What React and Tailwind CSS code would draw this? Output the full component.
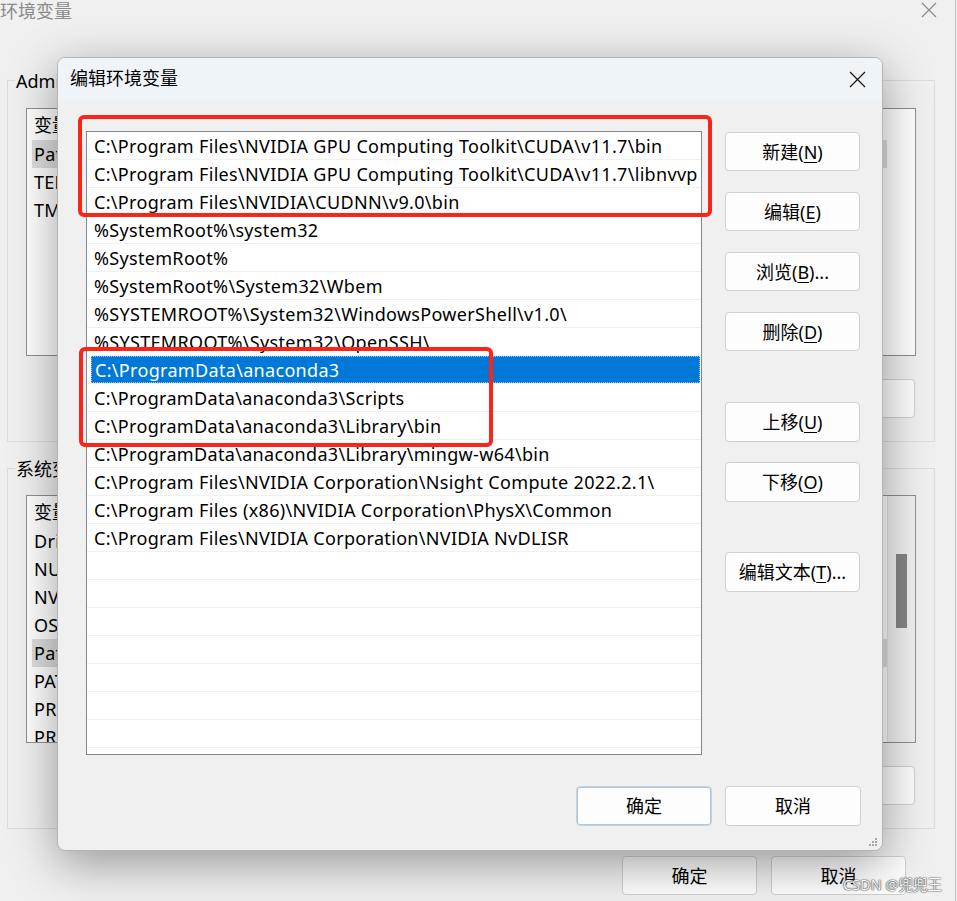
import React from "react";

const F = "font-['Noto_Sans','Noto_Sans_CJK_SC',sans-serif]";

function U({ children }) {
  return <span className="underline underline-offset-[3px] decoration-1">{children}</span>;
}

function Btn({ children, className = "" }) {
  return (
    <div className={"flex items-center justify-center w-[135px] rounded-[4px] border border-[#d0d0d0] bg-[#fdfdfd] text-[18px] leading-none text-black " + className}>
      {children}
    </div>
  );
}

function BgList({ rows, selected, scroll, height }) {
  return (
    <div className="flex border border-[#8b8e94] bg-white overflow-hidden" style={{ height }}>
      <div className={"flex-1 flex flex-col " + (scroll ? "" : "pr-[28px]")}>
        <div className="h-[31px] shrink-0 flex items-center pl-[7px] text-[18px] leading-none">
          <span className="w-[200px]">变量</span>
          <span>值</span>
        </div>
        {rows.map((r, i) => (
          <div key={i} className="h-[28px] shrink-0 pl-[5px]">
            <div className={"h-full flex items-center pl-[2px] text-[18px] leading-none tracking-[0.3px] " + (i === selected ? "bg-[#dedede]" : "")}>
              {r}
            </div>
          </div>
        ))}
      </div>
      {scroll && (
        <div className="w-[28px] shrink-0 border-l border-[#e4e4e4] bg-[#f0f0f0] pt-[58px] pl-[8px]">
          <div className="w-[11px] h-[74px] bg-[#858585]" />
        </div>
      )}
    </div>
  );
}

const items = [
  "C:\\Program Files\\NVIDIA GPU Computing Toolkit\\CUDA\\v11.7\\bin",
  "C:\\Program Files\\NVIDIA GPU Computing Toolkit\\CUDA\\v11.7\\libnvvp",
  "C:\\Program Files\\NVIDIA\\CUDNN\\v9.0\\bin",
  "%SystemRoot%\\system32",
  "%SystemRoot%",
  "%SystemRoot%\\System32\\Wbem",
  "%SYSTEMROOT%\\System32\\WindowsPowerShell\\v1.0\\",
  "%SYSTEMROOT%\\System32\\OpenSSH\\",
  "C:\\ProgramData\\anaconda3",
  "C:\\ProgramData\\anaconda3\\Scripts",
  "C:\\ProgramData\\anaconda3\\Library\\bin",
  "C:\\ProgramData\\anaconda3\\Library\\mingw-w64\\bin",
  "C:\\Program Files\\NVIDIA Corporation\\Nsight Compute 2022.2.1\\",
  "C:\\Program Files (x86)\\NVIDIA Corporation\\PhysX\\Common",
  "C:\\Program Files\\NVIDIA Corporation\\NVIDIA NvDLISR",
  "", "", "", "", "", "", "", "",
];

export default function App() {
  return (
    <div className={"relative w-[957px] h-[901px] overflow-hidden bg-[#f0f0f0] text-black " + F}>
      {/* background window */}
      <div className="flex flex-col w-[956px] h-full border-r border-[#c2c2c2]">
        <div className="h-[22px] flex items-center justify-between pr-[18px]">
          <span className="text-[18px] leading-none text-[#8a8a8a]">环境变量</span>
          <svg width="16" height="16" viewBox="0 0 16 16" className="-mt-[2px]">
            <path d="M1 1 L15 15 M15 1 L1 15" stroke="#8c8c8c" strokeWidth="1.2" fill="none" />
          </svg>
        </div>

        <div className="relative mt-[58px] ml-[7px] mr-[20px] h-[362px] border border-[#dcdcdc] px-[18px] pt-[27px]">
          <span className="absolute -top-[12px] left-[7px] px-[1px] bg-[#f0f0f0] text-[18px] leading-[24px]">Administrator 的用户变量(U)</span>
          <BgList rows={["Path", "TEMP", "TMP"]} selected={0} height={248} />
          <div className="flex justify-end gap-[14px] mt-[23px] pr-[1px]">
            <Btn className="h-[39px]">新建(<U>N</U>)...</Btn>
            <Btn className="h-[39px]">编辑(<U>E</U>)...</Btn>
            <Btn className="h-[39px]">删除(<U>D</U>)</Btn>
          </div>
        </div>

        <div className="relative mt-[26px] ml-[7px] mr-[20px] h-[361px] border border-[#dcdcdc] px-[18px] pt-[26px]">
          <span className="absolute -top-[12px] left-[7px] px-[1px] bg-[#f0f0f0] text-[18px] leading-[24px]">系统变量(S)</span>
          <BgList
            rows={["DriverData", "NUMBER_OF_PROCESSORS", "NVCUDASAMPLES_ROOT", "OS", "Path", "PATHEXT", "PROCESSOR_ARCHITECTURE", "PROCESSOR_IDENTIFIER"]}
            selected={4}
            scroll
            height={248}
          />
          <div className="flex justify-end gap-[14px] mt-[23px] pr-[1px]">
            <Btn className="h-[39px]">新建(<U>W</U>)...</Btn>
            <Btn className="h-[39px]">编辑(<U>I</U>)...</Btn>
            <Btn className="h-[39px]">删除(<U>L</U>)</Btn>
          </div>
        </div>

        <div className="flex justify-end gap-[14px] mt-[27px] pr-[49px]">
          <Btn className="h-[39px]">确定</Btn>
          <Btn className="h-[39px]">取消</Btn>
        </div>
      </div>

      {/* dialog */}
      <div className="absolute left-[57px] top-[57px] w-[826px] h-[794px] rounded-[8px] border border-[#b4b4b4] bg-[#f0f0f0] overflow-hidden shadow-[0_12px_48px_rgba(0,0,0,0.38)] flex flex-col">
        <div className="h-[43px] shrink-0 bg-[#eff4f9] flex items-center justify-between pl-[12px] pr-[16px]">
          <span className="text-[18px] leading-none -mt-[3px]">编辑环境变量</span>
          <svg width="17" height="17" viewBox="0 0 17 17">
            <path d="M1 1 L16 16 M16 1 L1 16" stroke="#1a1a1a" strokeWidth="1.3" fill="none" />
          </svg>
        </div>

        <div className="flex pt-[30px] pl-[28px]">
          <div className="w-[616px] h-[624px] border border-[#828790] bg-white overflow-hidden flex flex-col">
            {items.map((t, i) => (
              <div key={i} className="h-[28px] shrink-0 border-b border-[#f0f0f0] pl-[4px] pr-[1px]">
                <div className={"h-full flex items-center pl-[3px] text-[18px] leading-none tracking-[0.32px] whitespace-nowrap " + (i === 8 ? "bg-[#0078d7] text-white border border-dotted border-[#9cc8f0]" : "")}>
                  {t}
                </div>
              </div>
            ))}
          </div>

          <div className="ml-[23px] w-[135px] pt-[1px] flex flex-col">
            <Btn className="h-[39px]">新建(<U>N</U>)</Btn>
            <Btn className="h-[39px] mt-[21px]">编辑(<U>E</U>)</Btn>
            <Btn className="h-[39px] mt-[21px]">浏览(<U>B</U>)...</Btn>
            <Btn className="h-[39px] mt-[21px]">删除(<U>D</U>)</Btn>
            <Btn className="h-[40px] mt-[51px]">上移(<U>U</U>)</Btn>
            <Btn className="h-[40px] mt-[20px]">下移(<U>O</U>)</Btn>
            <Btn className="h-[40px] mt-[50px]">编辑文本(<U>T</U>)...</Btn>
          </div>
        </div>

        <div className="flex justify-end gap-[13px] mt-[31px] pr-[21px]">
          <Btn className="h-[40px] w-[136px] border-[#0067c0] shadow-[inset_0_0_0_1px_rgba(0,103,192,0.35)]">确定</Btn>
          <Btn className="h-[40px] w-[136px]">取消</Btn>
        </div>

        <svg className="absolute right-[4px] bottom-[3px]" width="10" height="10" viewBox="0 0 10 10">
          <rect x="7" y="1" width="2" height="2" fill="#a8a8a8" />
          <rect x="4" y="4" width="2" height="2" fill="#a8a8a8" />
          <rect x="7" y="4" width="2" height="2" fill="#a8a8a8" />
          <rect x="1" y="7" width="2" height="2" fill="#a8a8a8" />
          <rect x="4" y="7" width="2" height="2" fill="#a8a8a8" />
          <rect x="7" y="7" width="2" height="2" fill="#a8a8a8" />
        </svg>
      </div>

      {/* red annotation boxes */}
      <div className="absolute left-[78px] top-[115px] w-[634px] h-[102px] border-[4px] border-[#fb2418] rounded-[6px]" />
      <div className="absolute left-[79px] top-[347px] w-[414px] h-[100px] border-[4px] border-[#fb2418] rounded-[6px]" />

      {/* watermark */}
      <div className="absolute left-[843px] top-[877px] text-[14.5px] leading-none text-[#f8f8f8] [text-shadow:0_0_1px_#444,0_0_1px_#444,0_0_2px_#777]">CSDN @兜兜王</div>
    </div>
  );
}
